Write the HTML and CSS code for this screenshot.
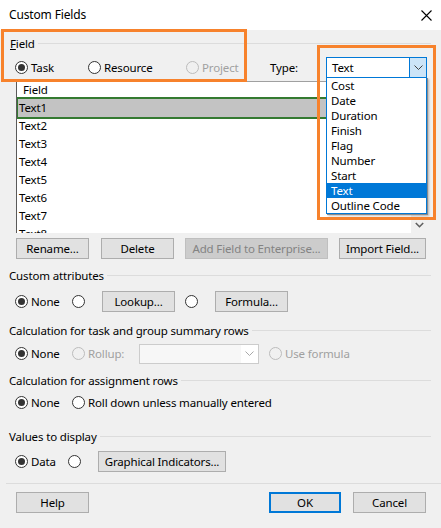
FILE: index.html
```html
<!DOCTYPE html>
<html>
<head>
<meta charset="utf-8">
<link rel="stylesheet" href="styles.css">
</head>
<body>
<div class="dialog">
  <div class="titlebar">
    <span class="title">Custom Fields</span>
    <svg class="close" width="11" height="11" viewBox="0 0 11 11"><path d="M0.5 0.5 L10.5 10.5 M10.5 0.5 L0.5 10.5" stroke="#000" stroke-width="1.1" fill="none"/></svg>
  </div>
  <div class="content">
    <div class="legend legend-first"><span><u>F</u>ield</span></div>
    <div class="row row-field">
      <span class="opt w-task"><span class="radio checked"></span><span class="lbl">Task</span></span>
      <span class="opt w-resource"><span class="radio"></span><span class="lbl">Resource</span></span>
      <span class="opt w-project disabled"><span class="radio"></span><span class="lbl">Project</span></span>
      <span class="type-label">Type:</span>
      <div class="combo type-combo">
        <span class="combo-text">Text</span>
        <span class="combo-arrow"><svg width="9" height="5" viewBox="0 0 9 5"><path d="M0.5 0.5 L4.5 4.5 L8.5 0.5" stroke="#404040" fill="none" stroke-width="1"/></svg></span>
      </div>
    </div>
    <div class="list">
      <div class="list-main">
        <div class="list-head">Field</div>
        <div class="list-row selected">Text1</div>
        <div class="list-row">Text2</div>
        <div class="list-row">Text3</div>
        <div class="list-row">Text4</div>
        <div class="list-row">Text5</div>
        <div class="list-row">Text6</div>
        <div class="list-row">Text7</div>
        <div class="list-row">Text8</div>
      </div>
      <div class="scrollbar">
        <span class="sb-down"><svg width="9" height="6" viewBox="0 0 9 6"><path d="M0.8 1 L4.5 4.7 L8.2 1" stroke="#606060" fill="none" stroke-width="1.6"/></svg></span>
      </div>
    </div>
    <div class="row btn-row">
      <button class="btn w73">Rename...</button>
      <button class="btn w73 ml12">Delete</button>
      <button class="btn w143 ml11" disabled>Add Field to Enterprise...</button>
      <button class="btn w87 ml11">Import Field...</button>
    </div>

    <div class="legend legend-custom"><span>Custom attributes</span></div>
    <div class="row row-custom">
      <span class="opt w57"><span class="radio checked"></span><span class="lbl">None</span></span>
      <span class="opt w30"><span class="radio"></span></span>
      <button class="btn w73">Lookup...</button>
      <span class="opt radio-gap"><span class="radio"></span></span>
      <button class="btn w73">Formula...</button>
    </div>

    <div class="legend legend-calc"><span>Calculation for task and group summary rows</span></div>
    <div class="row row-calc">
      <span class="opt w57"><span class="radio checked"></span><span class="lbl">None</span></span>
      <span class="opt w67 disabled"><span class="radio"></span><span class="lbl">Rollup:</span></span>
      <div class="combo dis-combo">
        <span class="combo-text"></span>
        <span class="combo-arrow"><svg width="9" height="5" viewBox="0 0 9 5"><path d="M0.5 0.5 L4.5 4.5 L8.5 0.5" stroke="#a8a8a8" fill="none" stroke-width="1"/></svg></span>
      </div>
      <span class="opt ml10 disabled"><span class="radio"></span><span class="lbl">Use formula</span></span>
    </div>

    <div class="legend legend-assign"><span>Calculation for assignment rows</span></div>
    <div class="row row-assign">
      <span class="opt w57"><span class="radio checked"></span><span class="lbl">None</span></span>
      <span class="opt"><span class="radio"></span><span class="lbl">Roll down unless manually entered</span></span>
    </div>

    <div class="legend legend-values"><span>Values to display</span></div>
    <div class="row row-values">
      <span class="opt w53"><span class="radio checked"></span><span class="lbl">Data</span></span>
      <span class="opt w30"><span class="radio"></span></span>
      <button class="btn w128">Graphical Indicators...</button>
    </div>

    <div class="separator"></div>

    <div class="row footer">
      <button class="btn w73">Help</button>
      <span class="spacer"></span>
      <button class="btn btn-default w72">OK</button>
      <button class="btn w73 ml12">Cancel</button>
    </div>
  </div>

  <div class="dropdown">
    <div class="dd-item">Cost</div>
    <div class="dd-item">Date</div>
    <div class="dd-item">Duration</div>
    <div class="dd-item">Finish</div>
    <div class="dd-item">Flag</div>
    <div class="dd-item">Number</div>
    <div class="dd-item">Start</div>
    <div class="dd-item active">Text</div>
    <div class="dd-item">Outline Code</div>
  </div>

  <div class="hl hl-field"></div>
  <div class="hl hl-type"></div>
</div>
</body>
</html>
```

FILE: styles.css
```css
* { box-sizing: border-box; }
html, body { margin: 0; padding: 0; }
body {
  width: 441px;
  height: 528px;
  overflow: hidden;
  background: #f0f0f0;
  font-family: "Noto Sans", "Open Sans", sans-serif;
  font-size: 11.5px;
  letter-spacing: -0.15px;
  color: #000;
}
.dialog {
  position: relative;
  width: 441px;
  height: 528px;
  background: #f0f0f0;
}
.titlebar {
  height: 30px;
  background: #fff;
  display: flex;
  align-items: center;
  padding-left: 9px;
  padding-right: 9px;
}
.title { flex: 1; font-size: 12px; line-height: 16px; }
.close { display: block; }

.content { padding-left: 9px; padding-right: 10px; }

.legend {
  display: flex;
  align-items: center;
  height: 16px;
  line-height: 16px;
}
.legend::after {
  content: "";
  flex: 1;
  border-top: 1px solid #dcdcdc;
  margin-left: 3px;
  margin-top: -1px;
}
.legend-first { margin-top: 6px; padding-left: 1px; }
.legend-custom { margin-top: 9px; }
.legend-calc { margin-top: 11px; }
.legend-assign { margin-top: 9px; }
.legend-values { margin-top: 16px; }

.row {
  display: flex;
  align-items: center;
  height: 21px;
  padding-left: 6px;
}
.row-field { margin-top: 5px; }
.row-custom { margin-top: 7px; }
.row-calc { margin-top: 4px; }
.row-assign { margin-top: 3px; }
.row-values { margin-top: 6px; }

.opt { display: inline-flex; align-items: center; flex: none; }
.radio {
  width: 13px;
  height: 13px;
  border: 1px solid #333;
  border-radius: 50%;
  background: #fff;
  position: relative;
  flex: none;
}
.radio.checked::after {
  content: "";
  position: absolute;
  left: 2px; top: 2px;
  width: 7px; height: 7px;
  border-radius: 50%;
  background: #333;
}
.lbl { margin-left: 3px; line-height: 16px; }
.opt.disabled .radio { border-color: #bcbcbc; background: #f0f0f0; }
.opt.disabled .lbl { color: #a0a0a0; }

.w-task { width: 73px; }
.w-resource { width: 98px; }
.w-project { width: 84px; }
.w30 { width: 30px; }
.w53 { width: 53px; }
.w57 { width: 57px; }
.w67 { width: 67px; }
.ml10 { margin-left: 10px; }

.radio-gap { margin-left: 10px; width: 30px; }

.type-label { width: 56px; line-height: 16px; }

.combo {
  display: flex;
  height: 21px;
  border: 1px solid #0078d7;
  background: #fff;
  flex: none;
}
.type-combo { width: 101px; margin-top: -1px; }
.combo-text { flex: 1; padding-left: 5px; line-height: 19px; }
.combo-arrow {
  width: 17px;
  display: flex;
  align-items: center;
  justify-content: center;
  background: #cce4f7;
  border-left: 1px solid #0078d7;
}
.dis-combo {
  width: 120px;
  height: 20px;
  border-color: #cccccc;
  background: #f7f7f7;
}
.dis-combo .combo-arrow {
  background: #fff;
  border-left: none;
}

.list {
  margin-top: 3px;
  margin-left: 7px;
  width: 412px;
  height: 152px;
  display: flex;
  background: #fff;
  border-top: 1px solid #a0a0a0;
  border-left: 1px solid #5a5a5a;
  overflow: hidden;
}
.list-main { flex: 1; overflow: hidden; height: 151px; }
.list-head {
  height: 18px;
  line-height: 18px;
  padding-left: 6px;
  margin-top: -1px;
  border-left: 1px solid #000;
  margin-left: -1px;
}
.list-row {
  height: 18px;
  line-height: 18px;
  padding-left: 2px;
}
.list-row.selected {
  background: #c3c3c3;
  outline: 2px solid #347a31;
  position: relative;
  margin-left: 1px;
  padding-left: 1px;
}
.scrollbar {
  width: 17px;
  background: #f0f0f0;
  display: flex;
  flex-direction: column;
  justify-content: flex-end;
}
.sb-down {
  height: 17px;
  display: flex;
  align-items: center;
  justify-content: center;
}

.btn-row { margin-top: 5px; padding-left: 7px; }
.btn {
  height: 21px;
  border: 1px solid #adadad;
  background: #e1e1e1;
  font-family: inherit;
  font-size: inherit;
  letter-spacing: inherit;
  color: #000;
  padding: 0;
  margin: 0;
  flex: none;
  line-height: 18px;
}
.btn:disabled {
  background: #cccccc;
  border-color: #bfbfbf;
  color: #838383;
}
.btn.ml11 { margin-left: 11px; }
.btn.ml12 { margin-left: 12px; }
.w72 { width: 72px; }
.w73 { width: 73px; }
.w87 { width: 87px; }
.w128 { width: 128px; }
.w143 { width: 143px; }
.btn-default { border: 2px solid #0078d7; }

.separator {
  margin-top: 11px;
  margin-left: -3px;
  margin-right: -10px;
  border-top: 1px solid #dcdcdc;
}
.footer { margin-top: 8px; padding-left: 7px; padding-right: 5px; }
.spacer { flex: 1; }

.dropdown {
  position: absolute;
  left: 326px;
  top: 77px;
  width: 101px;
  height: 137px;
  background: #fff;
  border: 1px solid #0078d7;
  box-shadow: 1px 1px 0 #8a8a8a, 2px 2px 2px rgba(0,0,0,0.25);
  font-size: 11.5px;
}
.dd-item {
  height: 15px;
  line-height: 15px;
  padding-left: 4px;
}
.dd-item.active {
  background: #0078d7;
  color: #fff;
}

.hl {
  position: absolute;
  border: 3px solid #f7822c;
  pointer-events: none;
}
.hl-field { left: 1px; top: 29px; width: 246px; height: 53px; }
.hl-type { left: 317px; top: 45px; width: 119px; height: 175px; }
```
